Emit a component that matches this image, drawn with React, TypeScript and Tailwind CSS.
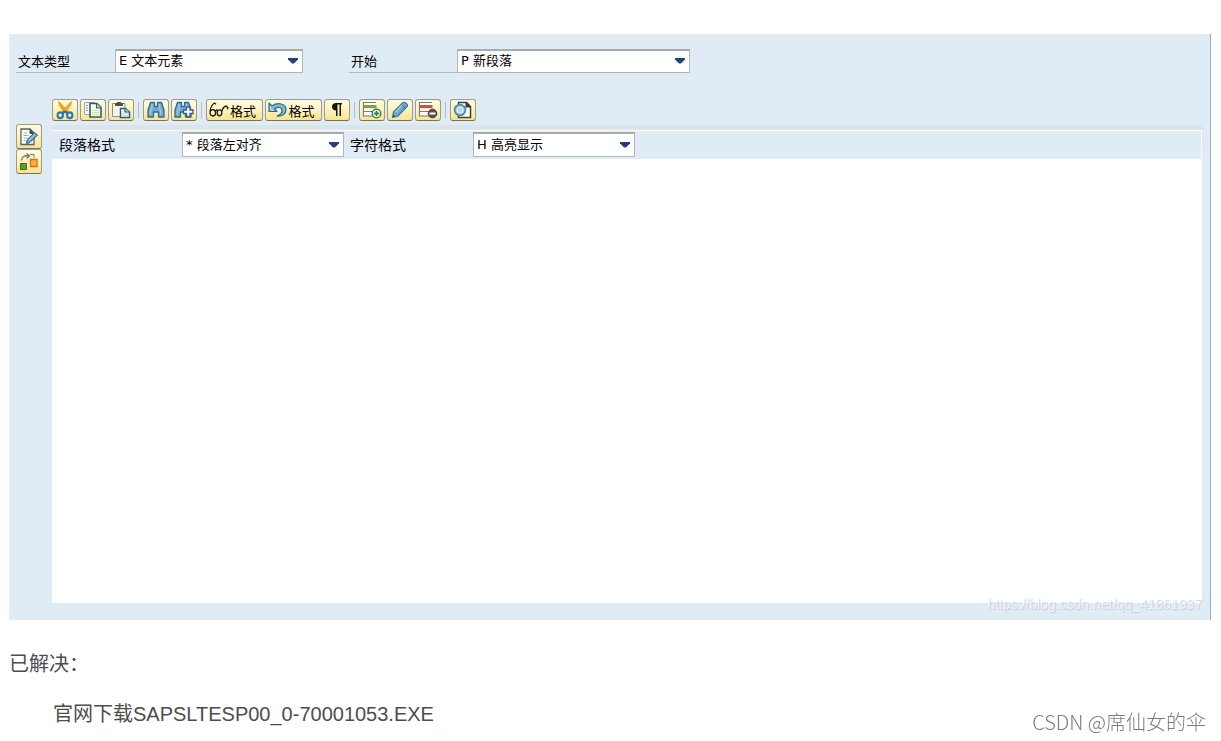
import React from 'react';

interface ComboProps {
  id: string;
  options: string[];
  className: string;
}

const Combo: React.FC<ComboProps> = ({ id, options, className }) => (
  <div className={`relative ${className}`}>
    <select
      id={id}
      className="block h-full w-full appearance-none border border-[#b4b6b8] border-t-2 border-t-[#a9abad] bg-white pb-px pl-[3px] pr-6 font-['DejaVu_Sans','Noto_Sans_CJK_SC',sans-serif] text-[13px] leading-5 text-black outline-none"
    >
      {options.map((option) => (
        <option key={option}>{option}</option>
      ))}
    </select>
    <svg className="pointer-events-none absolute right-[5px] top-1/2 -translate-y-1/2" width="10" height="6" viewBox="0 0 10 6">
      <path d="M0 0h10v1.200L6 5.500H4L0 1.200z" fill="#263f78" />
    </svg>
  </div>
);

interface ToolButtonProps {
  label: string;
  className?: string;
  children: React.ReactNode;
}

const ToolButton: React.FC<ToolButtonProps> = ({ label, className = 'h-[22px] w-[26px]', children }) => (
  <button
    type="button"
    aria-label={label}
    title={label}
    className={`flex shrink-0 items-center justify-center rounded-[3px] border border-[#a29c7c] border-b-[#77735b] bg-gradient-to-b from-[#fffbe4] via-[#fdf2bd] to-[#f8e48c] text-[13px] leading-none text-black ${className}`}
  >
    {children}
  </button>
);

const Separator = () => (
  <div className="flex h-[22px] items-center">
    <span className="mx-[2px] h-4 w-px shrink-0 bg-[#b9c0c4]" />
  </div>
);

const CutIcon = () => (
  <svg width="20" height="19" viewBox="0 0 18 18" fill="none">
    <path d="M3 1c.2 3 2 5.500 5 8l2 2 1.500-1.500L7 5C5.500 3.300 4.500 2 3 1z" fill="#f6a21b" stroke="#f09a18" />
    <path d="M15 1c-.2 3-2 5.500-5 8l-2 2-1.500-1.500L11 5c1.500-1.700 2.500-3 4-4z" fill="#fbb52b" stroke="#f3a01c" />
    <path d="M9 9.500 6.500 12M9 9.500l2.500 2.500" stroke="#2f7099" strokeWidth="2.200" />
    <ellipse cx="4.500" cy="13.500" rx="2.500" ry="2.700" fill="#e9f1ee" stroke="#3279a8" strokeWidth="2" />
    <ellipse cx="13.500" cy="13.500" rx="2.500" ry="2.700" fill="#e9f1ee" stroke="#3279a8" strokeWidth="2" />
  </svg>
);

const CopyIcon = () => (
  <svg width="20" height="18" viewBox="0 0 20 18" fill="none">
    <path d="M1.500 1.500h10v12h-10z" fill="#faf8ed" stroke="#a7a69b" />
    <path d="M3 4.500h2M3 7h2M3 9.500h2" stroke="#8e9191" />
    <path d="M7 2.500h7l4 4v9.500H7z" fill="#fff" stroke="#17638f" strokeWidth="1.600" />
    <path d="M13.500 2.500v4.500H18" fill="#f5d364" stroke="#17638f" strokeWidth="1.200" />
    <path d="M9 9.500h7M9 11.500h7M9 13.500h7" stroke="#e5d68d" />
  </svg>
);

const PasteIcon = () => (
  <svg width="20" height="18" viewBox="0 0 20 18" fill="none">
    <path d="M1.500 2.500h12.500v13H1.500z" fill="#f8f5e8" stroke="#8e9088" />
    <path d="M4 2h2V1h4v1h2v3H4z" fill="#4d5051" />
    <path d="M9.500 7.500h5l4 3.500v5.500h-9z" fill="#fff" stroke="#17638f" strokeWidth="1.500" />
    <path d="M14 7.500V11h4.500" fill="#f5d364" stroke="#17638f" strokeWidth="1.200" />
    <path d="M11 12.500h6M11 14.500h6" stroke="#e5d68d" />
  </svg>
);

const Binoculars = () => (
  <>
    <path d="M3.500 1.500h4v4h3v-4h4L17 9v7h-5.500v-5h-5v5H1V9z" fill="#75a9cf" stroke="#2d6b98" strokeWidth="1.300" strokeLinejoin="round" />
    <path d="M5 3v4L3.500 10v4M12.500 3v4l1 3v4" stroke="#9cc4e0" strokeWidth="1.500" />
  </>
);

const FindIcon = () => (
  <svg width="18" height="18" viewBox="0 0 18 18" fill="none">
    <Binoculars />
  </svg>
);

const FindNextIcon = () => (
  <svg width="20" height="18" viewBox="0 0 20 18" fill="none">
    <Binoculars />
    <path d="M12.500 6h3.500v3h3v3.500h-3v3h-3.500v-3h-3V9h3z" fill="#fff" stroke="#2d5d91" strokeWidth="1.300" />
  </svg>
);

const GlassesIcon = () => (
  <svg width="20" height="16" viewBox="0 0 20 16" fill="none" stroke="#1b1b16" strokeWidth="1.300">
    <ellipse cx="3.800" cy="10.800" rx="2.800" ry="3.200" />
    <ellipse cx="10.500" cy="10.800" rx="2.300" ry="3" />
    <path d="M1 9.500C1.500 5.500 3 2.500 5.500 1L7 2.200M6.400 9.500c.5-1.500 1.200-2 2-1M12.600 9.500c.9-3.200 2.700-5 4.600-5.500l1.800 1.800-.8 1.500" />
  </svg>
);

const UndoIcon = () => (
  <svg width="19" height="16" viewBox="0 0 19 16" fill="none">
    <path d="M1 1v8.500h8L6.500 7C10 4 14 5.500 14 8.500c0 2.500-2 4.500-5 5.500 5.500.5 9-2 9-6.500C18 2 10-.5 4 4z" fill="#82b7d7" stroke="#286b96" strokeWidth="1.200" strokeLinejoin="round" />
    <path d="M2.500 4v4H6" stroke="#c9e2ef" />
  </svg>
);

const ParagraphIcon = () => (
  <svg width="12" height="14" viewBox="0 0 12 14">
    <path d="M11 0v1.500h-1V13H8.500V1.500h-2V13H5V7.500C2.500 7.500 1 6 1 3.800S2.500 0 5 0z" fill="#17170f" />
  </svg>
);

const Rows = ({ color }: { color: string }) => (
  <>
    <path d="M1.500 1.500h12.500v13.500H1.500z" fill="#fff" />
    <path d="M14 1.500H1.500V15H14M1.500 10.500H14" stroke="#777b79" strokeWidth="1.200" />
    <path d="M2 4h12.500v3.200H2z" fill={color} />
  </>
);

const InsertRowIcon = () => (
  <svg width="20" height="18" viewBox="0 0 20 18" fill="none">
    <Rows color="#78ad22" />
    <circle cx="14.500" cy="12.500" r="4.300" fill="#f8fff8" stroke="#287447" strokeWidth="1.300" />
    <path d="M14.500 9.800v5.400M11.800 12.500h5.400" stroke="#39804f" strokeWidth="1.800" />
  </svg>
);

const DeleteRowIcon = () => (
  <svg width="20" height="18" viewBox="0 0 20 18" fill="none">
    <Rows color="#e44d20" />
    <circle cx="14.500" cy="12.500" r="4.300" fill="#555256" stroke="#39363b" />
    <path d="M11.500 12.500h6" stroke="#fff" strokeWidth="2" />
  </svg>
);

const PencilIcon = () => (
  <svg width="18" height="18" viewBox="0 0 18 18" fill="none">
    <path d="m1.500 16.500 1-5.500L12 1.500c2-1 5 1.500 4.500 3.500L7 15z" fill="#70a9cf" stroke="#397aa8" strokeWidth="1.200" strokeLinejoin="round" />
    <path d="m4.500 11 7-7.500" stroke="#a9cde5" strokeWidth="1.300" />
    <path d="m10.500 3.500 4 4" stroke="#2f6d9b" />
    <path d="m1.500 16.500.8-3L5 15.500z" fill="#285f88" />
  </svg>
);

const PreviewIcon = () => (
  <svg width="20" height="18" viewBox="0 0 20 18" fill="none">
    <path d="M5.500 1.500h8l4 4v11h-12z" fill="#fff" stroke="#3d413f" strokeWidth="1.500" />
    <path d="M13 1v5h5z" fill="#343837" stroke="#343837" />
    <circle cx="7" cy="9" r="5.500" fill="#8dbad7" stroke="#4d86ad" strokeWidth="1.600" />
    <circle cx="7" cy="9" r="3" fill="#b5d6e7" stroke="#e7f3f8" strokeWidth="1.200" />
  </svg>
);

const EditTextIcon = () => (
  <svg width="20" height="20" viewBox="0 0 20 20" fill="none">
    <path d="M2 2h9l4 4v11.500H2z" fill="#fff" stroke="#5a605f" strokeWidth="1.300" />
    <path d="M4.500 6h4M4.500 8.500h5M4.500 11h4M4.500 13.500h2" stroke="#a5a8a2" />
    <path d="M11 2v4.500h4" fill="#454a4a" stroke="#454a4a" />
    <path d="m7.500 16.500.8-4L15.500 5.500l3 2.500-7.500 7.500z" fill="#69a5cf" stroke="#285f88" strokeLinejoin="round" />
    <path d="m10 13 6-5.500" stroke="#add3ea" />
  </svg>
);

const ConvertIcon = () => (
  <svg width="20" height="20" viewBox="0 0 20 20" fill="none">
    <path d="M2.500 8.500C3 5 5.500 3 9.500 4M7.500 1.500l3 2.500-3 2.500" stroke="#77796b" strokeWidth="1.300" />
    <path d="M11 2.500h4v3" stroke="#77796b" />
    <path d="M1.500 11.500h6v6h-6z" fill="#5ca032" stroke="#386e22" />
    <path d="M11.500 7.500h6.500v7h-6.500z" fill="#fbb534" stroke="#e8641a" strokeWidth="1.300" />
  </svg>
);

export default function App() {
  return (
    <div className="min-h-screen bg-white px-[9px] pt-[34px] font-['Liberation_Sans','Noto_Sans_CJK_SC',sans-serif]">
      <section className="relative mr-px border-r border-[#8caed6] bg-[#dfebf5] px-[7px] pb-[17px] pt-[15px] font-['Noto_Sans_CJK_SC',sans-serif]">
        {/* Text type and start paragraph */}
        <div className="flex h-6 text-[13px] text-black">
          <label htmlFor="text-type" className="w-[99px] border-b border-[#b4b9bc] pl-[2px] leading-6">文本类型</label>
          <Combo id="text-type" options={['E 文本元素']} className="h-6 w-[188px]" />
          <label htmlFor="start" className="ml-[46px] w-[108px] border-b border-[#b4b9bc] pl-[2px] leading-6">开始</label>
          <Combo id="start" options={['P 新段落']} className="h-6 w-[233px]" />
        </div>

        <div className="mt-[26px] flex">
          <div className="mt-[25px] flex w-9 shrink-0 flex-col">
            <ToolButton label="编辑" className="h-[25px] w-[26px]"><EditTextIcon /></ToolButton>
            <ToolButton label="转换" className="h-[25px] w-[26px]"><ConvertIcon /></ToolButton>
          </div>

          <div className="min-w-0 flex-1">
            {/* Toolbar */}
            <div className="flex h-[26px] items-start gap-[2px]">
              <ToolButton label="剪切"><CutIcon /></ToolButton>
              <ToolButton label="复制"><CopyIcon /></ToolButton>
              <ToolButton label="粘贴"><PasteIcon /></ToolButton>
              <Separator />
              <ToolButton label="查找"><FindIcon /></ToolButton>
              <ToolButton label="查找下一个"><FindNextIcon /></ToolButton>
              <Separator />
              <ToolButton label="显示格式" className="h-[22px] w-[57px] gap-px pr-1"><GlassesIcon />格式</ToolButton>
              <ToolButton label="撤销格式" className="h-[22px] w-[57px] gap-px pr-1"><UndoIcon />格式</ToolButton>
              <ToolButton label="段落"><ParagraphIcon /></ToolButton>
              <Separator />
              <ToolButton label="插入行"><InsertRowIcon /></ToolButton>
              <ToolButton label="修改"><PencilIcon /></ToolButton>
              <ToolButton label="删除行"><DeleteRowIcon /></ToolButton>
              <Separator />
              <ToolButton label="预览"><PreviewIcon /></ToolButton>
            </div>

            {/* Paragraph and character formats */}
            <div className="h-[5px] bg-[#dae5ec]" />
            <div className="flex h-[29px] items-start border-r border-t border-white pl-[7px] pt-px text-sm text-black">
              <label htmlFor="paragraph-format" className="w-[123px] leading-6">段落格式</label>
              <Combo id="paragraph-format" options={['* 段落左对齐']} className="h-[25px] w-[162px]" />
              <label htmlFor="character-format" className="ml-[6px] w-[123px] leading-6">字符格式</label>
              <Combo id="character-format" options={['H 高亮显示']} className="h-[25px] w-[162px]" />
            </div>
            <textarea aria-label="文本" rows={22} className="block h-[444px] w-full resize-none bg-white p-2 text-sm outline-none" />
          </div>
          <div className="w-px shrink-0" />
        </div>

        <span className="pointer-events-none absolute bottom-2 right-2 font-['Liberation_Sans',sans-serif] text-sm leading-4 text-white/60 [text-shadow:1px_1px_1px_#c8ccd0]">
          https://blog.csdn.net/qq_41861937
        </span>
      </section>

      <article className="pt-[29px] text-xl leading-[30px] text-[#4d4d4d]">
        <p>已解决：</p>
        <p className="mt-5 pl-11">官网下载SAPSLTESP00_0-70001053.EXE</p>
      </article>

      <span className="pointer-events-none fixed bottom-1 right-[15px] font-['Noto_Sans_CJK_SC',sans-serif] text-xl font-light leading-[30px] text-[#7d7d7d]">
        CSDN @席仙女的伞
      </span>
    </div>
  );
}
